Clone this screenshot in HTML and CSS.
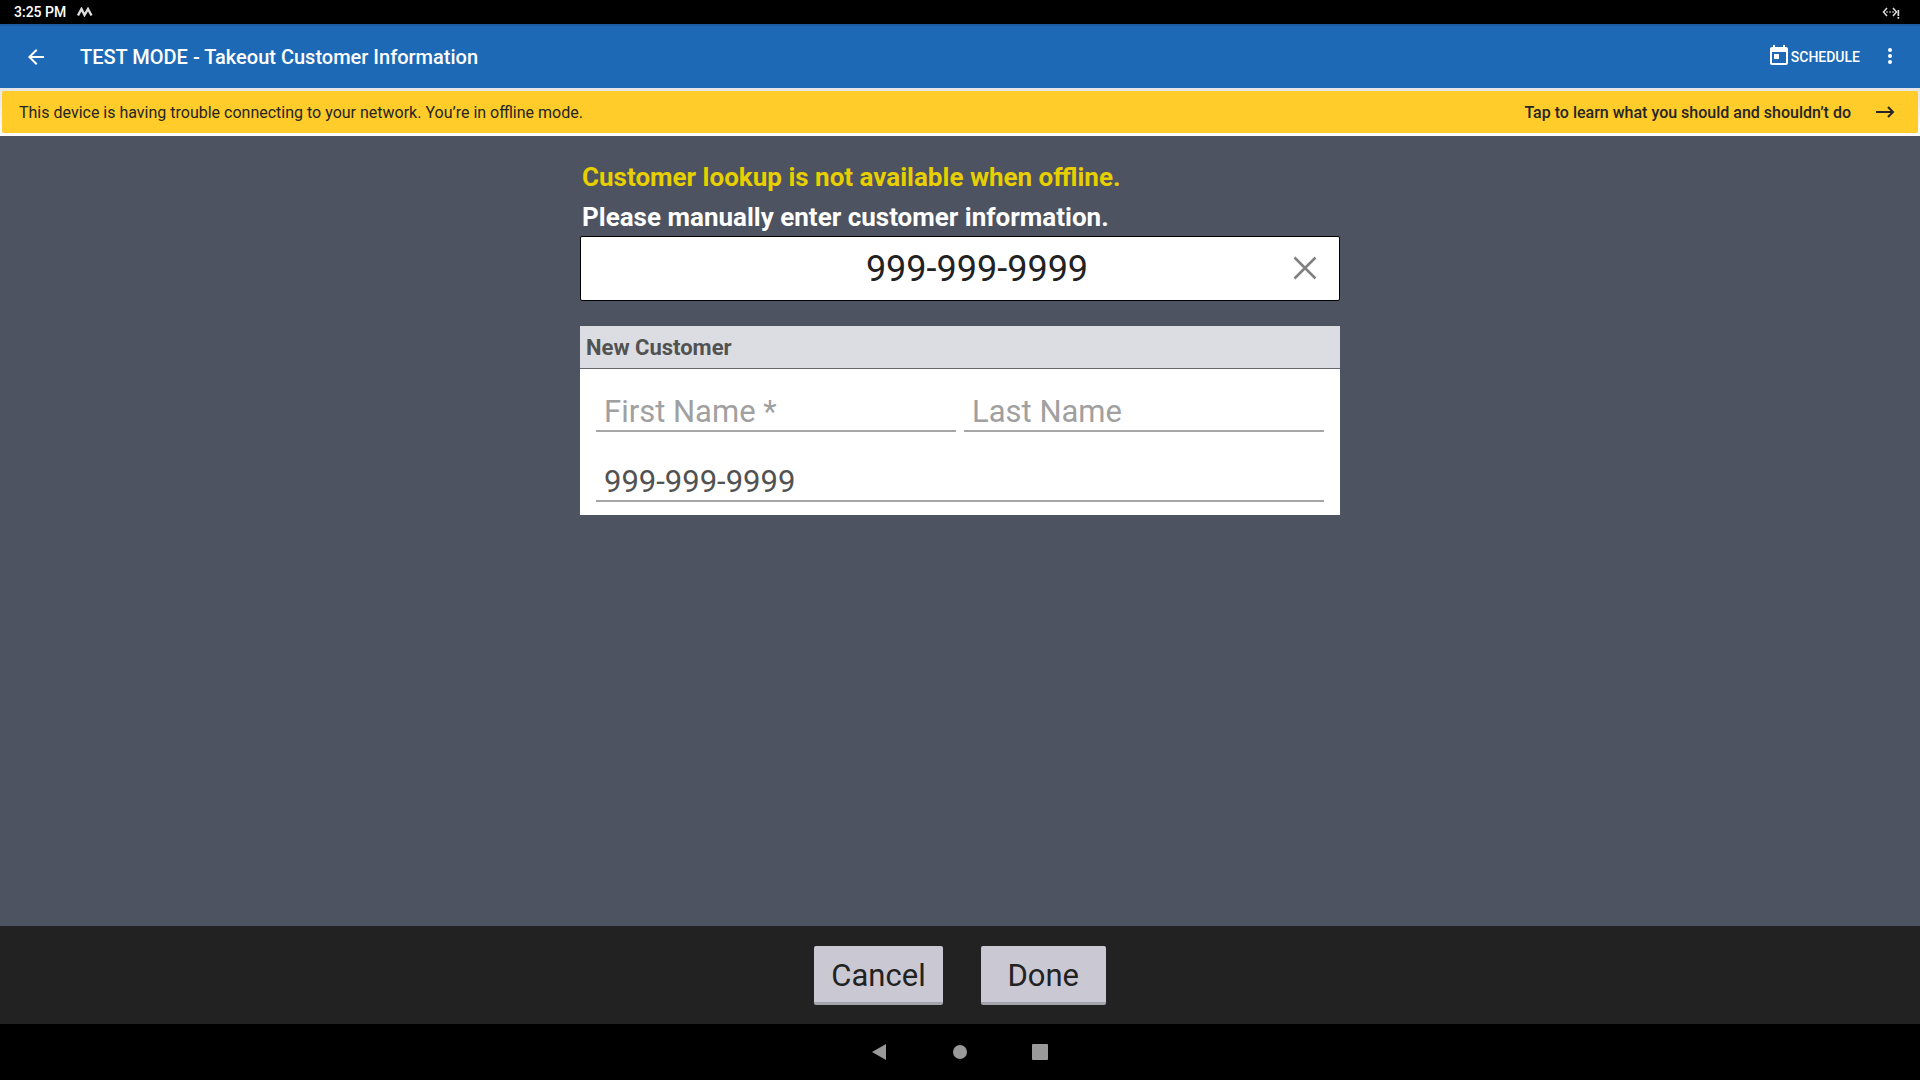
FILE: index.html
```html
<!DOCTYPE html>
<html lang="en">
<head>
<meta charset="utf-8">
<meta name="viewport" content="width=device-width, initial-scale=1">
<title>Takeout Customer Information</title>
<link rel="stylesheet" href="styles.css">
</head>
<body>
<div class="status-bar">
  <span class="clock">3:25 PM</span>
  <svg class="status-logo" width="16" height="10" viewBox="0 0 16 10" aria-hidden="true"><path d="M1 8.500L4.500 2L7.500 8L11 2L14.500 8.500" fill="none" stroke="currentColor" stroke-width="2.400"/></svg>
  <svg class="status-net" width="18" height="14" viewBox="0 0 18 14" aria-hidden="true"><path d="M5 3L1.500 7L5 11M11 3L14.500 7L11 11" fill="none" stroke="currentColor" stroke-width="1.500"/><path d="M4 6.500h2v1H4zM7 6.500h2v1H7zM10 6.500h2v1h-2zM15.500 5h1.700v6h-1.700zM15.500 12h1.700v1.700h-1.700z" fill="currentColor"/></svg>
</div>
<header class="app-bar">
  <button class="icon-button" type="button" aria-label="Back">
    <svg width="24" height="24" viewBox="0 0 24 24"><path d="M20 11H7.830l5.590-5.590L12 4l-8 8 8 8 1.410-1.410L7.830 13H20z" fill="currentColor"/></svg>
  </button>
  <h1 class="title">TEST MODE - Takeout Customer Information</h1>
  <button class="schedule" type="button">
    <svg width="24" height="24" viewBox="0 0 24 24" aria-hidden="true"><path d="M19 2h-1V0h-2v2H8V0H6v2H5c-1.110 0-1.990.9-1.990 2L3 18c0 1.100.89 2 2 2h14c1.100 0 2-.9 2-2V4c0-1.100-.9-2-2-2zm0 16H5V7h14v11zM7 9h5v5H7z" fill="currentColor"/></svg>
    SCHEDULE
  </button>
  <button class="icon-button menu" type="button" aria-label="More options">
    <svg width="24" height="24" viewBox="0 0 24 24"><g fill="currentColor"><circle cx="12" cy="5" r="2"/><circle cx="12" cy="11" r="2"/><circle cx="12" cy="17" r="2"/></g></svg>
  </button>
</header>
<div class="banner">
  <div class="banner-card">
    <p class="banner-text">This device is having trouble connecting to your network. You’re in offline mode.</p>
    <a class="banner-link" href="#offline-help">Tap to learn what you should and shouldn’t do
      <svg width="20" height="12" viewBox="0 0 20 12" aria-hidden="true"><path d="M1 6H18M13 1L18 6L13 11" fill="none" stroke="currentColor" stroke-width="2"/></svg>
    </a>
  </div>
</div>
<form class="customer">
  <main class="content">
    <p class="notice warning">Customer lookup is not available when offline.</p>
    <p class="notice">Please manually enter customer information.</p>
    <div class="lookup">
      <input class="lookup-input" type="tel" value="999-999-9999" aria-label="Phone lookup">
      <button class="clear" type="button" aria-label="Clear">
        <svg width="24" height="24" viewBox="0 0 24 24"><path d="M1.500 1.500L22.500 22.500M22.500 1.500L1.500 22.500" fill="none" stroke="currentColor" stroke-width="2.500"/></svg>
      </button>
    </div>
    <section class="panel">
      <h2 class="panel-title">New Customer</h2>
      <div class="fields">
        <input class="field" type="text" placeholder="First Name *" aria-label="First Name">
        <input class="field" type="text" placeholder="Last Name" aria-label="Last Name">
        <input class="field wide" type="tel" value="999-999-9999" aria-label="Phone">
      </div>
    </section>
  </main>
  <footer class="actions">
    <button class="action" type="button">Cancel</button>
    <button class="action" type="submit">Done</button>
  </footer>
</form>
<nav class="system-nav" aria-label="System">
  <button class="nav-button" type="button" aria-label="Back"><svg width="16" height="16" viewBox="0 0 16 16"><path d="M0 8L14 0V16Z" fill="currentColor"/></svg></button>
  <button class="nav-button" type="button" aria-label="Home"><svg width="16" height="16" viewBox="0 0 16 16"><circle cx="8" cy="8" r="7" fill="currentColor"/></svg></button>
  <button class="nav-button" type="button" aria-label="Recent apps"><svg width="16" height="16" viewBox="0 0 16 16"><rect width="16" height="16" rx="1" fill="currentColor"/></svg></button>
</nav>
</body>
</html>
```
FILE: styles.css
```css
* { box-sizing: border-box; }

body {
  margin: 0;
  min-height: 100vh;
  display: flex;
  flex-direction: column;
  background: #4d5360;
  font-family: Roboto, sans-serif;
  font-size: 16px;
}

h1, h2, p { margin: 0; }

button {
  margin: 0;
  padding: 0;
  border: 0;
  background: none;
  color: inherit;
  font: inherit;
}

svg { display: block; flex: none; }

.status-bar {
  display: flex;
  align-items: center;
  height: 24px;
  padding: 0 20px 0 14px;
  background: #000;
  color: #fff;
}

.clock { font-size: 14px; font-weight: 500; }
.status-logo { margin-left: 11px; color: #ddd; }
.status-net { margin-left: auto; color: #ddd; }

.app-bar {
  display: flex;
  align-items: center;
  height: 64px;
  padding: 0 6px 0 12px;
  border-top: 2px solid #1b5ea5;
  background: #1d69b6;
  color: #fff;
}

.icon-button {
  display: grid;
  place-items: center;
  width: 48px;
  height: 48px;
}

.title {
  flex: 1;
  margin-left: 20px;
  font-size: 20px;
  font-weight: 500;
}

.schedule {
  display: flex;
  align-items: center;
  font-size: 14px;
  font-weight: 500;
}

.menu { margin-left: 6px; }

.banner {
  padding: 3px 2px;
  background: linear-gradient(#e4e4e4, #fff);
}

.banner-card {
  display: flex;
  align-items: center;
  justify-content: space-between;
  min-height: 42px;
  padding: 0 23px 0 17px;
  border-radius: 2px;
  background: #ffcc29;
  color: #252525;
}

.banner-link {
  display: flex;
  align-items: center;
  gap: 24px;
  color: inherit;
  font-weight: 500;
  text-decoration: none;
}

.customer {
  flex: 1;
  display: flex;
  flex-direction: column;
}

.content {
  flex: 1;
  width: 100%;
  max-width: 760px;
  margin: 0 auto;
  padding: 20px 0;
}

.notice {
  padding: 2px 0 0 2px;
  color: #fff;
  font-size: 26px;
  font-weight: 700;
  line-height: 38px;
}

.warning { color: #e8cf00; }

.lookup { position: relative; }

.lookup-input {
  display: block;
  width: 100%;
  height: 65px;
  padding: 0 16px 0 50px;
  border: 1px solid #000;
  border-radius: 2px;
  background: #fff;
  color: #222;
  font: 36px Roboto, sans-serif;
  text-align: center;
}

.clear {
  position: absolute;
  top: 8px;
  right: 11px;
  display: grid;
  place-items: center;
  width: 48px;
  height: 48px;
  color: #808080;
}

.panel {
  margin-top: 25px;
  background: #fff;
}

.panel-title {
  padding: 2px 6px 0;
  border-bottom: 1px solid #65676c;
  background: #dcdde2;
  color: #525252;
  font-size: 22px;
  font-weight: 700;
  line-height: 40px;
}

.fields {
  display: grid;
  grid-template-columns: 1fr 1fr;
  gap: 22px 8px;
  padding: 15px 16px 13px;
}

.field {
  width: 100%;
  height: 48px;
  padding: 8px 8px 0;
  border: 0;
  border-bottom: 2px solid #a6a6a6;
  background: none;
  color: #525252;
  font: 31px Roboto, sans-serif;
}

.field::placeholder { color: #a0a0a0; opacity: 1; }
.wide { grid-column: 1 / -1; }

.actions {
  display: flex;
  justify-content: center;
  gap: 38px;
  padding: 20px 0 19px;
  background: #222;
}

.action {
  min-width: 125px;
  height: 59px;
  padding: 2px 17px 0;
  border-bottom: 3px solid #a3a3ab;
  border-radius: 2px;
  background: #cac9d3;
  color: #222;
  font-size: 31px;
}

.system-nav {
  display: flex;
  align-items: center;
  justify-content: center;
  gap: 32px;
  height: 56px;
  background: #000;
  color: #999;
}

.nav-button {
  display: grid;
  place-items: center;
  width: 48px;
  height: 48px;
}
```
